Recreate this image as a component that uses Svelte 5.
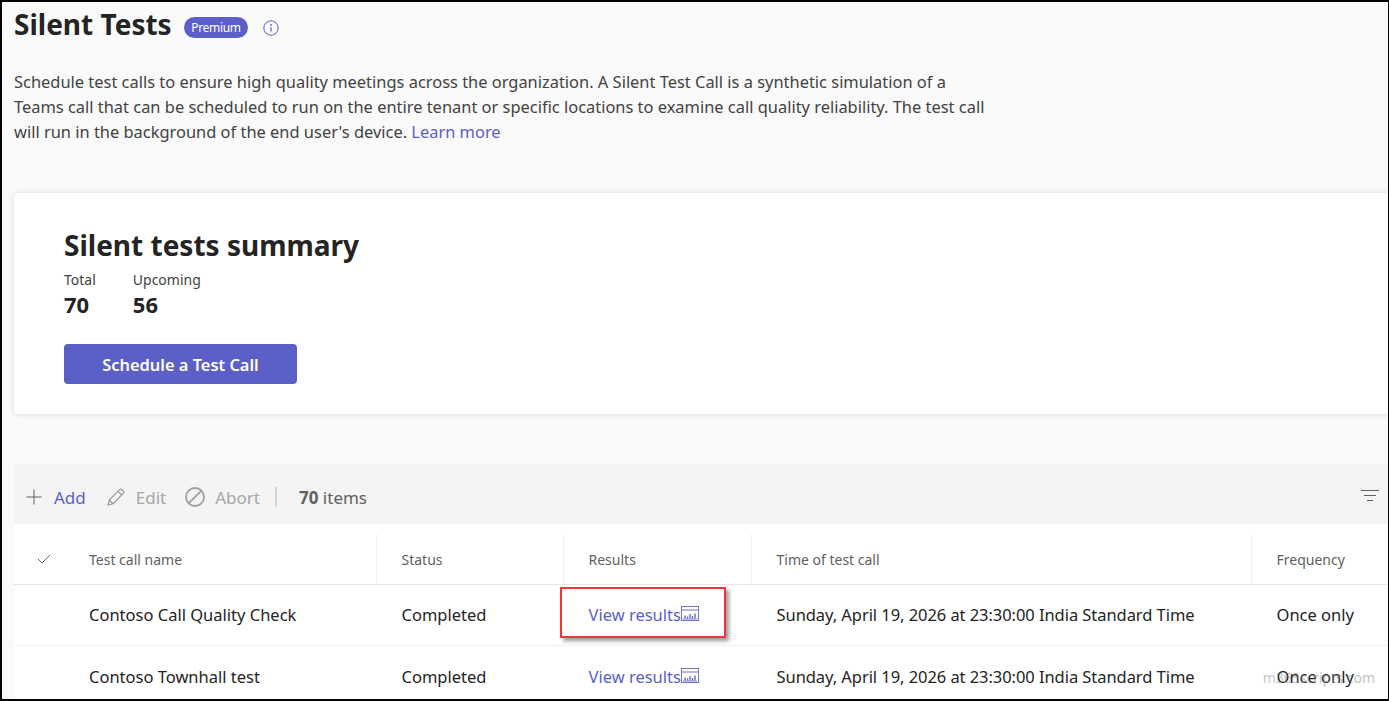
<script>
  const rows = [
    { name: 'Contoso Call Quality Check', highlighted: true },
    { name: 'Contoso Townhall test', highlighted: false }
  ];
</script>

<div class="frame">
  <header class="title-row">
    <h1>Silent Tests</h1>
    <span class="badge">Premium</span>
    <svg class="info" viewBox="0 0 16 16" width="16" height="16" fill="none">
      <circle cx="8" cy="8" r="7.2" stroke="#5b5fc7" stroke-width="1"/>
      <circle cx="8" cy="5" r="0.9" fill="#5b5fc7"/>
      <path d="M8 7.2v4.4" stroke="#5b5fc7" stroke-width="1.2"/>
    </svg>
  </header>

  <p class="desc">Schedule test calls to ensure high quality meetings across the organization. A Silent Test Call is a synthetic simulation of a<br>Teams call that can be scheduled to run on the entire tenant or specific locations to examine call quality reliability. The test call<br>will run in the background of the end user's device. <span class="link">Learn more</span></p>

  <section class="card">
    <h2>Silent tests summary</h2>
    <div class="stats">
      <div class="stat"><span class="label">Total</span><strong>70</strong></div>
      <div class="stat"><span class="label">Upcoming</span><strong>56</strong></div>
    </div>
    <button class="primary">Schedule a Test Call</button>
  </section>

  <section class="list">
    <div class="toolbar">
      <span class="tool add">
        <svg viewBox="0 0 16 16" width="16" height="16" fill="none"><path d="M8 .5v15M.5 8h15" stroke="#616161" stroke-width="1"/></svg>
        <span>Add</span>
      </span>
      <span class="tool off edit">
        <svg viewBox="0 0 18 18" width="18" height="18" fill="none"><path d="M1 17l1.300-5L12.600 1.700a1.800 1.800 0 0 1 2.500 0l1.200 1.200a1.800 1.800 0 0 1 0 2.500L6 15.700zM2.300 12L6 15.700M11 3.300l3.700 3.700" stroke="#999" stroke-width="1.200"/></svg>
        <span>Edit</span>
      </span>
      <span class="tool off abort">
        <svg viewBox="0 0 20 20" width="20" height="20" fill="none"><circle cx="10" cy="10" r="9" stroke="#a0a0a0" stroke-width="1.800"/><path d="M3.800 16.200L16.200 3.800" stroke="#a0a0a0" stroke-width="1.800"/></svg>
        <span>Abort</span>
      </span>
      <span class="sep"></span>
      <span class="count"><b>70</b> items</span>
      <svg class="filter" viewBox="0 0 18 12" width="18" height="12" fill="none"><path d="M0 .5h18M3 5.500h12M6 10.500h6" stroke="#616161" stroke-width="1"/></svg>
    </div>

    <div class="row head">
      <div class="cell check">
        <svg viewBox="0 0 14 10" width="14" height="10" fill="none"><path d="M1 5l4 4 8-8" stroke="#4f6f86" stroke-width="1"/></svg>
      </div>
      <div class="cell name">Test call name</div>
      <div class="cell">Status</div>
      <div class="cell">Results</div>
      <div class="cell">Time of test call</div>
      <div class="cell">Frequency</div>
    </div>

    {#each rows as r}
      <div class="row body">
        <div class="cell check"></div>
        <div class="cell name">{r.name}</div>
        <div class="cell">Completed</div>
        <div class="cell results" class:marked={r.highlighted}>
          <span class="link">View results</span>
          <svg class="chart" viewBox="0 0 18 15" width="18" height="15" fill="none">
            <rect x=".5" y=".5" width="17" height="14" stroke="#6f73cf" stroke-width="1"/>
            <path d="M.5 4h17" stroke="#6f73cf" stroke-width="1"/>
            <path d="M4 12.500v-3M6.500 12.500v-2M9 12.500v-4.500M11.500 12.500v-2.500M14 12.500v-5" stroke="#5b5fc7" stroke-width="1.300"/>
            <path d="M2 13h14" stroke="#5b5fc7" stroke-width=".8"/>
          </svg>
        </div>
        <div class="cell when">Sunday, April 19, 2026 at 23:30:00 India Standard Time</div>
        <div class="cell">Once only</div>
      </div>
    {/each}
  </section>

  <span class="watermark">m365scripts.com</span>
</div>

<style>
  :global(body) {
    margin: 0;
    background: #fafafa;
  }
  .frame {
    position: relative;
    box-sizing: border-box;
    width: 1389px;
    height: 701px;
    overflow: hidden;
    border: solid #000;
    border-width: 2px 1px 2px 2px;
    padding-left: 12px;
    background: #fafafa;
    color: #242424;
    font-family: "Noto Sans", "Open Sans", sans-serif;
  }
  .title-row {
    display: flex;
    align-items: center;
    height: 44px;
  }
  h1 {
    margin: 0;
    font-size: 28px;
    font-weight: 700;
    line-height: 44px;
  }
  .badge {
    margin-left: 12px;
    padding: 0 7.5px;
    height: 21px;
    line-height: 21px;
    border-radius: 11px;
    background: #5b5fc7;
    color: #fff;
    font-size: 12px;
    letter-spacing: -0.3px;
    margin-top: 7px;
  }
  .info {
    margin-left: 15px;
    margin-top: 7px;
  }
  .desc {
    margin: 23px 0 0;
    font-size: 16.43px;
    line-height: 25px;
    color: #424242;
    width: 1000px;
    white-space: nowrap;
  }
  .link {
    color: #5b5fc7;
  }
  .card {
    box-sizing: border-box;
    margin-top: 49px;
    height: 221px;
    width: 1400px;
    padding: 34px 50px 0;
    background: #fff;
    border-radius: 4px;
    box-shadow: 0 0 6px rgba(0, 0, 0, 0.14);
  }
  h2 {
    margin: 0;
    font-size: 28px;
    line-height: 36px;
    font-weight: 700;
  }
  .stats {
    display: flex;
    gap: 37px;
    margin-top: 7px;
  }
  .stat {
    display: flex;
    flex-direction: column;
  }
  .label {
    font-size: 14px;
    line-height: 20px;
    color: #424242;
  }
  .stat strong {
    font-size: 22px;
    line-height: 29px;
  }
  .primary {
    display: block;
    margin-top: 25px;
    width: 233px;
    height: 40px;
    border: 0;
    border-radius: 4px;
    background: #5b5fc7;
    color: #fff;
    font: 600 16.4px "Noto Sans", sans-serif;
    padding: 0;
  }
  .list {
    margin-top: 50px;
    background: #fff;
    width: 1400px;
  }
  .toolbar {
    position: relative;
    display: flex;
    align-items: center;
    height: 60px;
    padding-left: 12px;
    padding-top: 6px;
    background: #f4f4f4;
    font-size: 17px;
    width: 1375px;
    box-sizing: border-box;
  }
  .tool {
    display: inline-flex;
    align-items: center;
    gap: 12px;
  }
  .add { color: #5b5fc7; }
  .off { color: #a6a6a6; }
  .edit { margin-left: 21px; gap: 11px; }
  .abort { margin-left: 19px; gap: 10px; }
  .sep {
    width: 2px;
    height: 20px;
    background: #d6d6d6;
    margin: 0 22px 0 15px;
  }
  .count { color: #616161; }
  .count b { font-weight: 700; }
  .filter {
    position: absolute;
    right: 10px;
    top: 26px;
  }
  .row {
    display: grid;
    grid-template-columns: 75px 287px 187px 188px 500px 150px;
    width: 1387px;
  }
  .head {
    height: 61px;
    padding-top: 10px;
    font-size: 14px;
    color: #616161;
    border-bottom: 1px solid #e6e6e6;
    box-sizing: border-box;
  }
  .head .cell + .cell + .cell {
    border-left: 1px solid #f0f0f0;
    padding-left: 24.5px;
  }
  .body {
    height: 61px;
    font-size: 16.5px;
    border-bottom: 1px solid #f0f0f0;
    box-sizing: border-box;
  }
  .head + .body {
    padding-bottom: 2px;
  }
  .cell {
    display: flex;
    align-items: center;
    box-sizing: border-box;
    padding-left: 25.5px;
    white-space: nowrap;
  }
  .cell.name { padding-left: 0; }
  .cell.check { padding-left: 23px; }
  .when { letter-spacing: -0.06px; }
  .results { position: relative; }
  .chart { margin-bottom: 2px; }
  .marked::after {
    content: "";
    position: absolute;
    left: -3px;
    top: 2px;
    width: 162px;
    height: 47px;
    border: 2px solid #f4333b;
    box-shadow: 3px 3px 4px rgba(0, 0, 0, 0.4);
  }
  .watermark {
    position: absolute;
    right: 13px;
    top: 666px;
    font-size: 14px;
    color: rgba(130, 130, 130, 0.5);
  }
</style>
